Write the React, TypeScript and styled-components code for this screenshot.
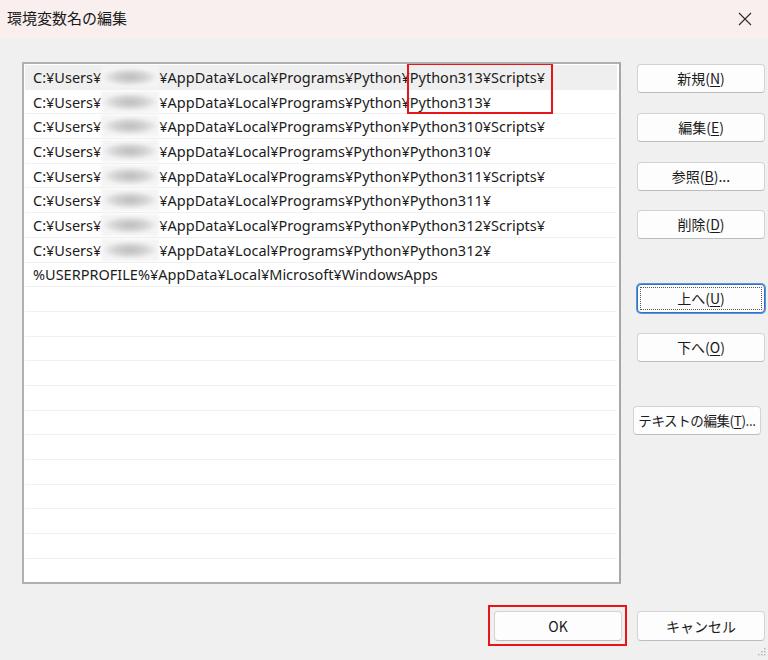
import React from "react";
import styled, { createGlobalStyle } from "styled-components";

const Global = createGlobalStyle`
  html, body { margin: 0; padding: 0; background: #f0f0f0; }
  body { font-family: "Noto Sans", "Noto Sans CJK JP", sans-serif; color: #1a1a1a; }
`;

const Window = styled.div`
  position: relative;
  width: 768px;
  height: 660px;
  background: #f0f0f0;
  display: flex;
  flex-direction: column;
  overflow: hidden;
`;

const TitleBar = styled.div`
  height: 38px;
  flex: none;
  background: #f9efee;
  display: flex;
  align-items: center;
  justify-content: space-between;
  padding-left: 7px;
  box-sizing: border-box;
`;

const Title = styled.div`
  font-family: "Noto Sans CJK JP", sans-serif;
  font-size: 15px;
  color: #1a1a1a;
  margin-top: -3px;
`;

const CloseBox = styled.div`
  width: 46px;
  height: 38px;
  display: flex;
  align-items: center;
  justify-content: center;
`;

const Main = styled.div`
  display: flex;
  padding: 24px 0 0 22px;
`;

const ListBox = styled.div`
  position: relative;
  width: 599px;
  height: 522px;
  box-sizing: border-box;
  border: 2px solid #adb0b5;
  border-right-color: #a4a7ad;
  background: #ffffff;
  padding: 1px 2px 0 1px;
  overflow: hidden;
`;

const Row = styled.div<{ $selected?: boolean }>`
  height: 24.7px;
  box-sizing: border-box;
  border-bottom: 1px solid #f0f0f0;
  background: ${(p) => (p.$selected ? "#efefef" : "#ffffff")};
  display: flex;
  align-items: center;
  padding-left: 8px;
  font-family: "Noto Sans", "Noto Sans CJK JP", sans-serif;
  font-size: 14.5px;
  white-space: nowrap;
  color: #1c1c1c;
`;

const Blur = styled.span`
  display: inline-block;
  width: 58px;
  height: 22px;
  flex: none;
  background: radial-gradient(ellipse 48% 40% at 50% 50%, #bdbdbd 0%, #d3d3d3 55%, #e8e8e8 85%, #f4f4f4 100%);
  filter: blur(1.5px);
`;

const Highlight = styled.div`
  position: absolute;
  left: 383px;
  top: -1px;
  width: 146px;
  height: 51px;
  box-sizing: border-box;
  border: 2px solid #e8141b;
  pointer-events: none;
`;

const Side = styled.div`
  display: flex;
  flex-direction: column;
  margin-left: 11px;
  padding-top: 2px;
  width: 134px;
`;

const Btn = styled.button<{ $gap?: number; $focus?: boolean; $shift?: number; $tight?: boolean }>`
  position: relative;
  margin-top: ${(p) => p.$gap ?? 0}px;
  margin-left: ${(p) => 5 + (p.$shift ?? 0)}px;
  width: 128px;
  height: 29px;
  box-sizing: border-box;
  background: #fdfdfd;
  border: 1px solid ${(p) => (p.$focus ? "#2f73c8" : "#d3d3d3")};
  border-bottom-color: ${(p) => (p.$focus ? "#2f73c8" : "#bdbdbd")};
  box-shadow: ${(p) => (p.$focus ? "0 0 0 1px #5b93d6" : "none")};
  border-radius: 4px;
  font-family: "Noto Sans CJK JP", "Noto Sans", sans-serif;
  font-size: ${(p) => (p.$tight ? "13.5px" : "14px")};
  letter-spacing: ${(p) => (p.$tight ? "-0.4px" : "0")};
  white-space: nowrap;
  color: #1a1a1a;
  padding: 0;
  text-align: center;
  line-height: 27px;
  &::after {
    content: "";
    display: ${(p) => (p.$focus ? "block" : "none")};
    position: absolute;
    inset: 2px;
    border: 1px dotted #555;
    border-radius: 1px;
  }
`;

const U = styled.span`
  text-decoration: underline;
  text-underline-offset: 2px;
`;

const Footer = styled.div`
  display: flex;
  justify-content: flex-end;
  gap: 15px;
  padding: 27px 3px 0 0;
`;

const FootBtn = styled(Btn)`
  height: 30px;
  line-height: 28px;
  margin: 0;
`;

const Marked = styled.div`
  position: relative;
  &::after {
    content: "";
    position: absolute;
    left: -6px;
    top: -6px;
    right: -5px;
    bottom: -5px;
    border: 2px solid #e8141b;
    pointer-events: none;
  }
`;

const Grip = styled.svg`
  position: absolute;
  right: 2px;
  bottom: 2px;
`;

const paths: { user: boolean; rest: string }[] = [
  { user: true, rest: "¥AppData¥Local¥Programs¥Python¥Python313¥Scripts¥" },
  { user: true, rest: "¥AppData¥Local¥Programs¥Python¥Python313¥" },
  { user: true, rest: "¥AppData¥Local¥Programs¥Python¥Python310¥Scripts¥" },
  { user: true, rest: "¥AppData¥Local¥Programs¥Python¥Python310¥" },
  { user: true, rest: "¥AppData¥Local¥Programs¥Python¥Python311¥Scripts¥" },
  { user: true, rest: "¥AppData¥Local¥Programs¥Python¥Python311¥" },
  { user: true, rest: "¥AppData¥Local¥Programs¥Python¥Python312¥Scripts¥" },
  { user: true, rest: "¥AppData¥Local¥Programs¥Python¥Python312¥" },
  { user: false, rest: "%USERPROFILE%¥AppData¥Local¥Microsoft¥WindowsApps" },
];

export default function App() {
  const empty = Array.from({ length: 12 });
  return (
    <>
      <Global />
      <Window>
        <TitleBar>
          <Title>環境変数名の編集</Title>
          <CloseBox>
            <svg width="14" height="14" viewBox="0 0 14 14">
              <path d="M1 1 L13 13 M13 1 L1 13" stroke="#2b2b2b" strokeWidth="1.1" fill="none" />
            </svg>
          </CloseBox>
        </TitleBar>
        <Main>
          <ListBox>
            {paths.map((p, i) => (
              <Row key={i} $selected={i === 0}>
                {p.user ? (
                  <>
                    <span>C:¥Users¥</span>
                    <Blur />
                    <span>{p.rest}</span>
                  </>
                ) : (
                  <span>{p.rest}</span>
                )}
              </Row>
            ))}
            {empty.map((_, i) => (
              <Row key={"e" + i} />
            ))}
            <Highlight />
          </ListBox>
          <Side>
            <Btn>新規(<U>N</U>)</Btn>
            <Btn $gap={20}>編集(<U>E</U>)</Btn>
            <Btn $gap={20}>参照(<U>B</U>)...</Btn>
            <Btn $gap={19}>削除(<U>D</U>)</Btn>
            <Btn $gap={45} $focus>上へ(<U>U</U>)</Btn>
            <Btn $gap={20}>下へ(<U>O</U>)</Btn>
            <Btn $gap={44} $shift={-4} $tight>テキストの編集(<U>T</U>)...</Btn>
          </Side>
        </Main>
        <Footer>
          <Marked>
            <FootBtn>OK</FootBtn>
          </Marked>
          <FootBtn>キャンセル</FootBtn>
        </Footer>
        <Grip width="10" height="10" viewBox="0 0 10 10">
          <g fill="#b5b5b5">
            <rect x="8" y="0" width="1.5" height="1.5" />
            <rect x="5" y="3" width="1.5" height="1.5" />
            <rect x="8" y="3" width="1.5" height="1.5" />
            <rect x="2" y="6" width="1.5" height="1.5" />
            <rect x="5" y="6" width="1.5" height="1.5" />
            <rect x="8" y="6" width="1.5" height="1.5" />
          </g>
        </Grip>
      </Window>
    </>
  );
}
